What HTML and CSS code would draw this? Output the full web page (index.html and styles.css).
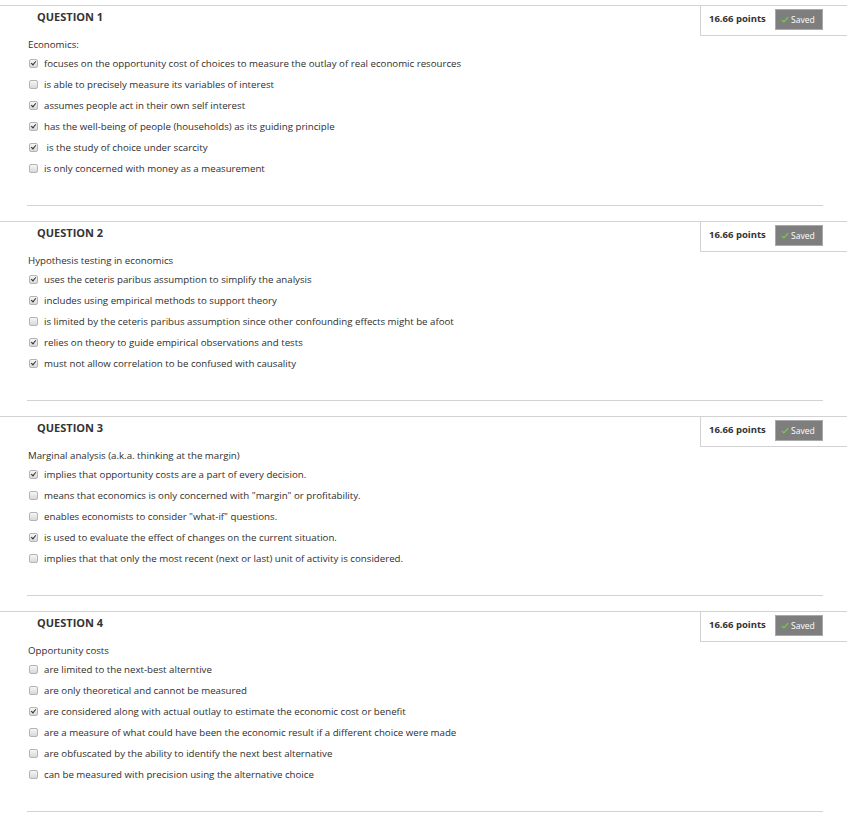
FILE: index.html
```html
<!DOCTYPE html>
<html>
<head>
<meta charset="utf-8">
<link rel="stylesheet" href="styles.css">
</head>
<body>
<div class="page">

<section class="question">
  <div class="q-head">
    <h2 class="q-title">QUESTION 1</h2>
    <div class="q-points"><span class="pts">16.66 points</span><span class="saved"><svg class="tick" viewBox="0 0 10 8" width="8" height="7"><path d="M1 4.5 L3.6 7 L9 1" fill="none" stroke="#6fcf3f" stroke-width="1.6"/></svg>Saved</span></div>
  </div>
  <div class="q-body">
    <p class="prompt">Economics:</p>
    <ul class="opts">
      <li class="opt"><span class="cb on"></span>focuses on the opportunity cost of choices to measure the outlay of real economic resources</li>
      <li class="opt"><span class="cb"></span>is able to precisely measure its variables of interest</li>
      <li class="opt"><span class="cb on"></span>assumes people act in their own self interest</li>
      <li class="opt"><span class="cb on"></span>has the well-being of people (households) as its guiding principle</li>
      <li class="opt"><span class="cb on"></span>&nbsp;is the study of choice under scarcity</li>
      <li class="opt"><span class="cb"></span>is only concerned with money as a measurement</li>
    </ul>
  </div>
</section>

<section class="question">
  <div class="q-head">
    <h2 class="q-title">QUESTION 2</h2>
    <div class="q-points"><span class="pts">16.66 points</span><span class="saved"><svg class="tick" viewBox="0 0 10 8" width="8" height="7"><path d="M1 4.5 L3.6 7 L9 1" fill="none" stroke="#6fcf3f" stroke-width="1.6"/></svg>Saved</span></div>
  </div>
  <div class="q-body">
    <p class="prompt">Hypothesis testing in economics</p>
    <ul class="opts">
      <li class="opt"><span class="cb on"></span>uses the ceteris paribus assumption to simplify the analysis</li>
      <li class="opt"><span class="cb on"></span>includes using empirical methods to support theory</li>
      <li class="opt"><span class="cb"></span>is limited by the ceteris paribus assumption since other confounding effects might be afoot</li>
      <li class="opt"><span class="cb on"></span>relies on theory to guide empirical observations and tests</li>
      <li class="opt"><span class="cb on"></span>must not allow correlation to be confused with causality</li>
    </ul>
  </div>
</section>

<section class="question">
  <div class="q-head">
    <h2 class="q-title">QUESTION 3</h2>
    <div class="q-points"><span class="pts">16.66 points</span><span class="saved"><svg class="tick" viewBox="0 0 10 8" width="8" height="7"><path d="M1 4.5 L3.6 7 L9 1" fill="none" stroke="#6fcf3f" stroke-width="1.6"/></svg>Saved</span></div>
  </div>
  <div class="q-body">
    <p class="prompt">Marginal analysis (a.k.a. thinking at the margin)</p>
    <ul class="opts">
      <li class="opt"><span class="cb on"></span>implies that opportunity costs are a part of every decision.</li>
      <li class="opt"><span class="cb"></span>means that economics is only concerned with "margin" or profitability.</li>
      <li class="opt"><span class="cb"></span>enables economists to consider "what-if" questions.</li>
      <li class="opt"><span class="cb on"></span>is used to evaluate the effect of changes on the current situation.</li>
      <li class="opt"><span class="cb"></span>implies that that only the most recent (next or last) unit of activity is considered.</li>
    </ul>
  </div>
</section>

<section class="question">
  <div class="q-head">
    <h2 class="q-title">QUESTION 4</h2>
    <div class="q-points"><span class="pts">16.66 points</span><span class="saved"><svg class="tick" viewBox="0 0 10 8" width="8" height="7"><path d="M1 4.5 L3.6 7 L9 1" fill="none" stroke="#6fcf3f" stroke-width="1.6"/></svg>Saved</span></div>
  </div>
  <div class="q-body">
    <p class="prompt">Opportunity costs</p>
    <ul class="opts">
      <li class="opt"><span class="cb"></span>are limited to the next-best alterntive</li>
      <li class="opt"><span class="cb"></span>are only theoretical and cannot be measured</li>
      <li class="opt"><span class="cb on"></span>are considered along with actual outlay to estimate the economic cost or benefit</li>
      <li class="opt"><span class="cb"></span>are a measure of what could have been the economic result if a different choice were made</li>
      <li class="opt"><span class="cb"></span>are obfuscated by the ability to identify the next best alternative</li>
      <li class="opt"><span class="cb"></span>can be measured with precision using the alternative choice</li>
    </ul>
  </div>
</section>

</div>
</body>
</html>
```
FILE: styles.css
```css
html, body {
  margin: 0;
  padding: 0;
  background: #ffffff;
}
body {
  font-family: "Open Sans", "DejaVu Sans", sans-serif;
  color: #2e2e2e;
}
.page {
  width: 847px;
  padding-top: 5px;
}
.question {
  margin-bottom: 15px;
}
.q-head {
  display: flex;
  border-top: 1px solid #d2d2d2;
}
.q-title {
  flex: 1;
  margin: 0;
  padding: 3px 0 0 37px;
  font-size: 11px;
  line-height: 16px;
  font-weight: 700;
  color: #333333;
}
.q-points {
  width: 138px;
  height: 29px;
  border-left: 1px solid #d2d2d2;
  border-bottom: 1px solid #d2d2d2;
  display: flex;
  align-items: flex-start;
  padding-left: 8px;
  box-sizing: content-box;
}
.pts {
  font-size: 9.5px;
  font-weight: 700;
  line-height: 14px;
  margin-top: 6px;
  width: 66px;
  color: #333333;
}
.saved {
  margin-top: 3px;
  width: 48px;
  height: 21px;
  background: #7e7e7e;
  border: 1px solid #a9a9a9;
  color: #ffffff;
  font-size: 8.5px;
  display: flex;
  align-items: center;
  padding-left: 5px;
  box-sizing: border-box;
  gap: 2px;
}
.tick {
  display: block;
}
.q-body {
  margin-left: 27px;
  width: 796px;
  padding-bottom: 26px;
  border-bottom: 1px solid #d2d2d2;
}
.prompt {
  margin: 1px 0 0 1px;
  font-size: 9.7px;
  line-height: 16px;
}
.opts {
  list-style: none;
  margin: 0;
  padding: 0 0 0 2px;
}
.opt {
  display: flex;
  align-items: center;
  height: 21px;
  font-size: 9.7px;
  white-space: pre;
}
.cb {
  flex: none;
  width: 9px;
  height: 9px;
  box-sizing: border-box;
  border: 1px solid #b4b4b4;
  border-radius: 2px;
  background: linear-gradient(#f6f6f6, #d8d8d8);
  margin-right: 6px;
  position: relative;
}
.cb.on::after {
  content: "";
  position: absolute;
  left: 2px;
  top: 0px;
  width: 2px;
  height: 4px;
  border-right: 1.5px solid #333333;
  border-bottom: 1.5px solid #333333;
  transform: rotate(40deg);
}
```
